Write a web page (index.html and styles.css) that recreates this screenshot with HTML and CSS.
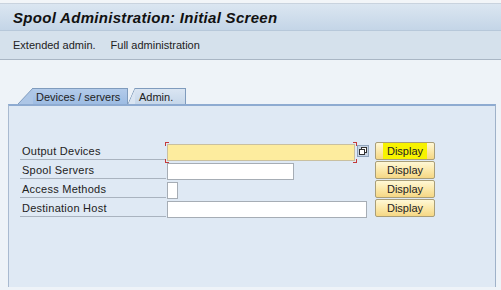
FILE: index.html
```html
<!DOCTYPE html>
<html lang="en">

<head>
    <meta charset="UTF-8">
    <meta name="viewport" content="width=device-width, initial-scale=1.0">
    <title>Spool Administration: Initial Screen</title>
    <link rel="stylesheet" href="styles.css">
</head>

<body>
    <div class="topStrip"></div>
    <div class="titleBar">Spool Administration: Initial Screen</div>
    <div class="toolBar">
        <span class="toolItem">Extended admin.</span>
        <span class="toolItem">Full administration</span>
    </div>

    <div class="content">
        <div class="tabs">
            <div class="tab active">
                <span class="slant"></span>
                <span class="tabText">Devices / servers</span>
            </div>
            <div class="tab">
                <span class="slant small"></span>
                <span class="tabText">Admin.</span>
            </div>
        </div>

        <div class="panel">
            <div class="row">
                <div class="label">Output Devices</div>
                <div class="field">
                    <span class="required">
                        <input class="inp focus" type="text" value="">
                    </span>
                    <span class="f4">
                        <svg width="12" height="12" viewBox="0 0 12 12">
                            <rect x="0.5" y="0.5" width="11" height="11" fill="#c7d4e4" stroke="#8fa3bb" />
                            <rect x="4.5" y="2.5" width="5" height="5" fill="#fff" stroke="#333" />
                            <rect x="2.5" y="4.5" width="5" height="5" fill="#fff" stroke="#333" />
                        </svg>
                    </span>
                </div>
                <button class="btn"><span class="hl">Display</span></button>
            </div>
            <div class="row">
                <div class="label">Spool Servers</div>
                <div class="field"><input class="inp w127" type="text"></div>
                <button class="btn">Display</button>
            </div>
            <div class="row">
                <div class="label">Access Methods</div>
                <div class="field"><input class="inp w11" type="text"></div>
                <button class="btn">Display</button>
            </div>
            <div class="row">
                <div class="label">Destination Host</div>
                <div class="field"><input class="inp w200" type="text"></div>
                <button class="btn">Display</button>
            </div>
        </div>
    </div>
</body>

</html>
```

FILE: styles.css
```css
html {
    overflow: hidden;
}

body {
    margin: 0;
    width: 501px;
    height: 290px;
    overflow: hidden;
    font-family: "Liberation Sans", Arial, sans-serif;
    font-size: 11px;
    color: #222;
    background-color: #eef3f8;
}

.topStrip {
    height: 3px;
    background-color: #f2f5f8;
    border-bottom: 1px solid #c9d3de;
}

.titleBar {
    height: 27px;
    box-sizing: border-box;
    padding: 5px 0 0 13px;
    font-size: 15px;
    font-weight: bold;
    font-style: italic;
    letter-spacing: 0.3px;
    color: #111;
    background: linear-gradient(#dbe6f1, #c4d5e7);
    border-bottom: 1px solid #b7c8da;
}

.toolBar {
    height: 29px;
    box-sizing: border-box;
    display: flex;
    align-items: center;
    gap: 15px;
    padding-left: 13px;
    background-color: #d5e1ec;
    border-bottom: 1px solid #a9b6c4;
}

.content {
    padding: 28px 0 0 8px;
}

.tabs {
    display: flex;
    height: 16px;
    margin-left: 10px;
}

.tab {
    display: flex;
    height: 16px;
}

.slant {
    width: 15px;
    height: 16px;
    background: linear-gradient(to bottom right, transparent calc(50% - 0.7px), #7f9bbd 50%, #adc6e6 calc(50% + 0.7px));
}

.slant.small {
    width: 7px;
    background: linear-gradient(to bottom right, transparent calc(50% - 0.7px), #8aa3c0 50%, #dae5f2 calc(50% + 0.7px));
}

.tabText {
    box-sizing: border-box;
    height: 16px;
    padding: 2px 0 0 3px;
    border-top: 1px solid #7f9bbd;
    border-right: 1px solid #7f9bbd;
    background: linear-gradient(#dae5f2, #c6d7ea);
}

.tab.active .tabText {
    width: 95px;
    background: linear-gradient(#b3cbea, #9dbce3);
}

.tab:not(.active) .tabText {
    width: 51px;
    padding-left: 4px;
}

.panel {
    box-sizing: border-box;
    width: 488px;
    height: 183px;
    padding-top: 35px;
    background-color: #dfe9f4;
    border-top: 2px solid #8eabd1;
    border-left: 1px solid #a9bad0;
    border-right: 1px solid #9fb2c9;
}

.row {
    display: grid;
    grid-template-columns: 146px 207px 60px;
    column-gap: 1px;
    height: 19px;
    margin-left: 11px;
}

.label {
    box-sizing: border-box;
    height: 19px;
    padding: 4px 0 0 2px;
    letter-spacing: 0.25px;
    border-bottom: 1px solid #a9b3bf;
}

.field {
    display: flex;
    align-items: flex-start;
    padding-top: 3px;
}

.inp {
    box-sizing: border-box;
    height: 17px;
    margin: 0;
    padding: 0 2px;
    border: 1px solid #a6adb5;
    background-color: #fff;
    font-family: inherit;
    font-size: 11px;
    outline: none;
}

.required {
    margin: -2px 0 0 -2px;
    padding: 2px;
    background:
        linear-gradient(#c43a3a, #c43a3a) left top / 4px 1px no-repeat,
        linear-gradient(#c43a3a, #c43a3a) left top / 1px 4px no-repeat,
        linear-gradient(#c43a3a, #c43a3a) right top / 4px 1px no-repeat,
        linear-gradient(#c43a3a, #c43a3a) right top / 1px 4px no-repeat,
        linear-gradient(#c43a3a, #c43a3a) left bottom / 4px 1px no-repeat,
        linear-gradient(#c43a3a, #c43a3a) left bottom / 1px 4px no-repeat,
        linear-gradient(#c43a3a, #c43a3a) right bottom / 4px 1px no-repeat,
        linear-gradient(#c43a3a, #c43a3a) right bottom / 1px 4px no-repeat;
    display: flex;
}

.inp.focus {
    width: 188px;
    background-color: #fdec9e;
    border-color: #c9c0a0;
}

.f4 {
    display: flex;
    margin: 1px 0 0 0;
}

.w127 {
    width: 127px;
}

.w11 {
    width: 11px;
    padding: 0;
}

.w200 {
    width: 200px;
}

.btn {
    box-sizing: border-box;
    width: 60px;
    height: 18px;
    margin: 1px 0 0 0;
    padding: 0;
    font-family: inherit;
    font-size: 11px;
    color: #222;
    border: 1px solid #a99e78;
    border-radius: 2px;
    background: linear-gradient(#fff8d6, #fbe7a6 55%, #f5d785);
}

.hl {
    background-color: #f7f300;
    padding: 2px 4px 2px 4px;
}
```
